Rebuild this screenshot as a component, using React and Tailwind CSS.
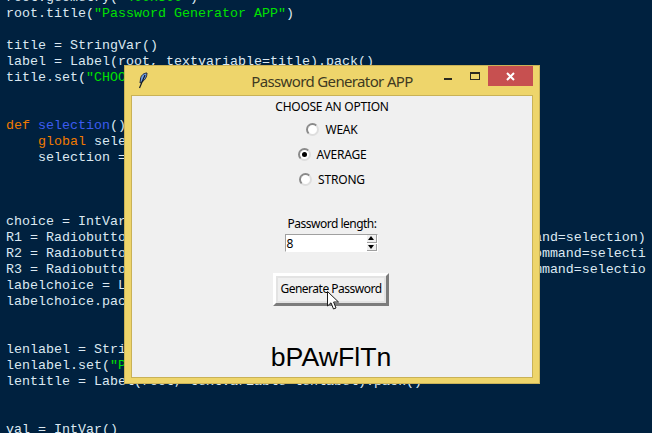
import React from 'react';

const W = 'text-[#dce9f2]';
const G = 'text-[#00e000]';
const O = 'text-[#f07a00]';
const B = 'text-[#3d5bf0]';

// code behind the window, one entry per line of the editor
const codeLines = [
    [[W, 'root.geometry('], [G, '"400x300"'], [W, ')']],
    [[W, 'root.title('], [G, '"Password Generator APP"'], [W, ')']],
    [],
    [[W, 'title = StringVar()']],
    [[W, 'label = Label(root, textvariable=title).pack()']],
    [[W, 'title.set('], [G, '"CHOOSE AN OPTION"'], [W, ')']],
    [],
    [],
    [[O, 'def '], [B, 'selection'], [W, '():']],
    [[W, '    '], [O, 'global'], [W, ' selection']],
    [[W, '    selection = choice.get()']],
    [],
    [],
    [],
    [[W, 'choice = IntVar()']],
    [[W, 'R1 = Radiobutton(root, text="WEAK", variable=choice, value=1, command=selection)']],
    [[W, 'R2 = Radiobutton(root, text="AVERAGE", variable=choice, value=2, command=selecti']],
    [[W, 'R3 = Radiobutton(root, text="STRONG", variable=choice, value=3, command=selectio']],
    [[W, 'labelchoice = Label(root)']],
    [[W, 'labelchoice.pack()']],
    [],
    [],
    [[W, 'lenlabel = StringVar()']],
    [[W, 'lenlabel.set('], [G, '"Password length:"'], [W, ')']],
    [[W, 'lentitle = Label(root, textvariable=lenlabel).pack()']],
    [],
    [],
    [[W, 'val = IntVar()']],
];

const Radio = ({ label, checked }) => (
    <div className="h-[25px] flex items-center gap-[6px]">
        <div className="w-[13px] h-[13px] rounded-full bg-white border-2 border-t-[#8a8a8a] border-l-[#8a8a8a] border-r-[#dedede] border-b-[#dedede] flex items-center justify-center">
            {checked && <div className="w-[5px] h-[5px] rounded-full bg-black"></div>}
        </div>
        <span className="tracking-[-0.2px]">{label}</span>
    </div>
);

const App = () => {
    return (
        <div className="relative w-[652px] h-[433px] overflow-hidden bg-[#00213f] font-['Liberation_Mono',monospace] text-[13.33px] leading-4 pl-[6px]">
            <div className="-mt-[10px]">
                {codeLines.map((line, i) => (
                    <div key={i} className="h-4 whitespace-pre">
                        {line.map(([color, text], j) => (
                            <span key={j} className={color}>{text}</span>
                        ))}
                    </div>
                ))}
            </div>

            {/* tk window */}
            <div className="absolute left-[124px] top-[65px] w-[416px] h-[319px] flex flex-col bg-[#eed56b] border border-[#c9b257] font-['Noto_Sans',sans-serif] text-black">
                <div className="h-[29px] shrink-0 grid grid-cols-[1fr_auto_1fr] px-[6px]">
                    <div className="pt-[6px] pl-[7px]">
                        <svg width="10" height="17" viewBox="0 0 10 17">
                            <path d="M9 1 C6 1 3 3 2.5 7 L2 11 L4 10 C7 8 9 5 9 1 Z" fill="#6f9fe8" stroke="#1d2740" strokeWidth="1" />
                            <path d="M7 3 L1.5 16" stroke="#111827" strokeWidth="1.2" fill="none" />
                        </svg>
                    </div>
                    <div className="text-[#3f3a22] text-[15px] tracking-[-0.64px] leading-[29px] pt-[1px] whitespace-nowrap">Password Generator APP</div>
                    <div className="flex justify-end items-start">
                        <div className="w-[27px] h-5 flex justify-center pt-3">
                            <div className="w-2 h-[2px] bg-[#2b2a20]"></div>
                        </div>
                        <div className="w-[27px] h-5 flex justify-center pt-[6px]">
                            <div className="w-[10px] h-[8px] border border-t-2 border-[#2b2a20]"></div>
                        </div>
                        <div className="w-[45px] h-5 bg-[#c75050] flex items-center justify-center">
                            <svg width="9" height="9" viewBox="0 0 9 9">
                                <path d="M1 1 L8 8 M8 1 L1 8" stroke="#ffffff" strokeWidth="2" />
                            </svg>
                        </div>
                    </div>
                </div>

                <div className="flex-1 mx-[6px] mb-[5px] border border-[#c9b257] bg-[#f0f0f0] flex flex-col items-center text-[12px]">
                    <div className="h-5 leading-[22px] tracking-[-0.25px]">CHOOSE AN OPTION</div>
                    <div className="mt-px flex flex-col items-center">
                        <Radio label="WEAK" />
                        <Radio label="AVERAGE" checked />
                        <Radio label="STRONG" />
                    </div>
                    <div className="mt-[23px] h-4 leading-[18px] tracking-[-0.5px]">Password length:</div>
                    <div className="mt-[3px] -ml-[2px] w-[93px] h-[18px] flex bg-white border border-t-[#a0a0a0] border-l-[#a0a0a0] border-r-white border-b-white">
                        <span className="flex-1 pl-px leading-[18px]">8</span>
                        <div className="w-[10px] flex flex-col gap-px">
                            <div className="flex-1 bg-[#f0f0f0] border-r border-b border-[#a0a0a0] flex items-center justify-center">
                                <div className="w-0 h-0 border-x-[3px] border-x-transparent border-b-[4px] border-b-black"></div>
                            </div>
                            <div className="flex-1 bg-[#f0f0f0] border-r border-b border-[#a0a0a0] flex items-center justify-center">
                                <div className="w-0 h-0 border-x-[3px] border-x-transparent border-t-[4px] border-t-black"></div>
                            </div>
                        </div>
                    </div>
                    <div className="mt-[21px] -ml-[2px] w-[116px] h-[33px] border-[3px] border-t-white border-l-white border-r-[#7c7c7c] border-b-[#7c7c7c]">
                        <div className="w-full h-full border-2 border-[#e3e3e3] bg-[#f0f0f0] text-center tracking-[-0.5px] leading-[22px] whitespace-nowrap">Generate Password</div>
                    </div>
                    <div className="mt-[36px] -ml-[2px] font-['Liberation_Sans',sans-serif] text-[26.67px] leading-[31px]">bPAwFlTn</div>
                </div>
            </div>

            {/* mouse pointer */}
            <svg className="absolute left-[326px] top-[290px]" width="14" height="21" viewBox="0 0 14 21">
                <path d="M1.5 1.5 L1.5 16 L5 12.8 L7.5 19 L10 18 L7.6 12 L12.5 12 Z" fill="#ffffff" stroke="#1a1a1a" strokeWidth="1" />
            </svg>
        </div>
    );
};

export default App;
